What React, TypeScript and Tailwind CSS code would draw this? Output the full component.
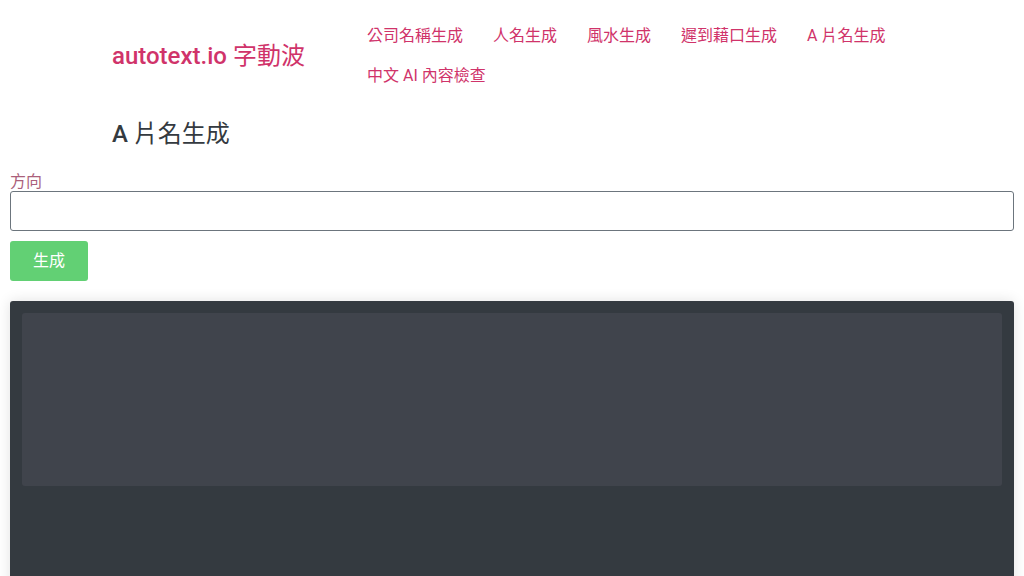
const navItems = [
  "公司名稱生成",
  "人名生成",
  "風水生成",
  "遲到藉口生成",
  "A 片名生成",
  "中文 AI 內容檢查",
];

const font = {
  fontFamily:
    'Roboto, "Noto Sans CJK TC", "Noto Sans CJK SC", sans-serif',
};

export default function App() {
  return (
    <div className="min-h-screen bg-white" style={font}>
      <header className="mx-auto flex w-[800px] items-center pt-4">
        <a className="w-[255px] shrink-0 text-2xl text-[#d0336a]">
          <span className="font-medium">autotext.io</span> 字動波
        </a>
        <nav className="flex w-[580px] shrink-0 flex-wrap">
          {navItems.map((item) => (
            <a
              key={item}
              className="mr-[30px] py-2 text-base leading-6 text-[#d0336a]"
            >
              {item}
            </a>
          ))}
        </nav>
      </header>

      <h1 className="mx-auto mt-[22px] w-[800px] text-2xl leading-8 font-normal text-[#343a40]">
        <span className="font-medium">A</span> 片名生成
      </h1>

      <div className="px-[10px] pt-[22px]">
        <label className="block text-base leading-[19px] text-[#ab5f7b]">
          方向
        </label>
        <input
          type="text"
          className="block h-10 w-full rounded-[3px] border border-[#6c757d] px-3 outline-none"
        />
        <button className="mt-[10px] h-10 w-[78px] rounded-[3px] bg-[#62d074] text-base text-white">
          生成
        </button>

        <div className="mt-5 h-[300px] rounded-t-[3px] bg-[#343a40] p-3 shadow-[0_0_14px_rgba(0,0,0,0.12)]">
          <div className="h-[173px] rounded-[3px] bg-[#40444c]" />
        </div>
      </div>
    </div>
  );
}
